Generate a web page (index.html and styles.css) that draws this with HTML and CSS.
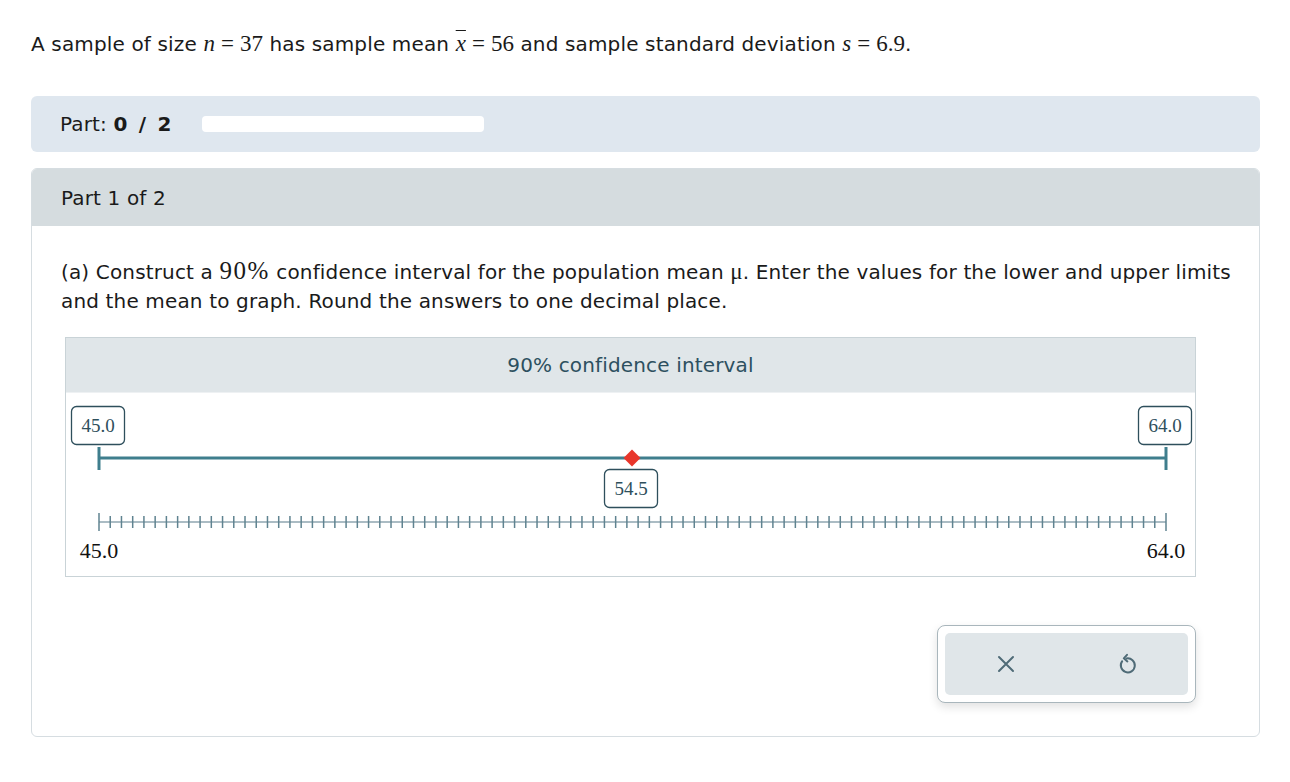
FILE: index.html
```html
<!DOCTYPE html>
<html>
<head>
<meta charset="utf-8">
<link rel="stylesheet" href="styles.css">
</head>
<body>
<div class="page">
  <p class="stem">A sample of size <span class="m"><i>n</i><span class="eq">=</span>37</span> has sample mean <span class="m"><i class="bar">x</i><span class="eq">=</span>56</span> and sample standard deviation <span class="m"><i>s</i><span class="eq">=</span>6.9</span>.</p>

  <div class="partbar">
    <span class="partlabel">Part: <b>0 / 2</b></span>
    <span class="progress"></span>
  </div>

  <div class="card">
    <div class="card-header">Part 1 of 2</div>
    <div class="card-body">
      <p class="question">(a) Construct a <span class="m pct">90%</span> confidence interval for the population mean <span class="mu">μ</span>. Enter the values for the lower and upper limits and the mean to graph. Round the answers to one decimal place.</p>

      <div class="graph">
        <div class="graph-title">90% confidence interval</div>
        <div class="plot">
          <svg width="1129" height="183" viewBox="0 0 1129 183" xmlns="http://www.w3.org/2000/svg">
            <g id="axis"></g>
            <line x1="33" y1="65" x2="1100" y2="65" stroke="#3f7e8d" stroke-width="3"/>
            <line x1="33" y1="54" x2="33" y2="77" stroke="#3f7e8d" stroke-width="3"/>
            <line x1="1100" y1="54" x2="1100" y2="77" stroke="#3f7e8d" stroke-width="3"/>
            <rect x="560" y="59" width="12" height="12" fill="#e8362b" transform="rotate(45 566 65)"/>
            <rect x="5.5" y="13.5" width="53" height="38" rx="5" fill="#fff" stroke="#2e4f5c" stroke-width="1.3"/>
            <text x="32" y="39" class="lbl" text-anchor="middle">45.0</text>
            <rect x="1072.5" y="13.5" width="53" height="38" rx="5" fill="#fff" stroke="#2e4f5c" stroke-width="1.3"/>
            <text x="1099" y="39" class="lbl" text-anchor="middle">64.0</text>
            <rect x="538.5" y="76.5" width="53" height="38" rx="5" fill="#fff" stroke="#2e4f5c" stroke-width="1.3"/>
            <text x="565" y="102" class="lbl" text-anchor="middle">54.5</text>
            <text x="33" y="165" class="ax" text-anchor="middle">45.0</text>
            <text x="1100" y="165" class="ax" text-anchor="middle">64.0</text>
          </svg>
        </div>
      </div>

      <div class="actions">
        <div class="actions-inner">
          <button class="btn" aria-label="Clear">
            <svg width="18" height="18" viewBox="0 0 18 18"><path d="M2 2 L16 16 M16 2 L2 16" stroke="#4f6b77" stroke-width="2" fill="none" stroke-linecap="round"/></svg>
          </button>
          <button class="btn" aria-label="Undo">
            <svg width="20" height="22" viewBox="0 0 20 22"><path d="M5.2 8.2 A7 7 0 1 0 9.5 5.5" stroke="#4f6b77" stroke-width="2" fill="none" stroke-linecap="round"/><path d="M10 1.8 L6.8 5.3 L10.4 8.4" stroke="#4f6b77" stroke-width="2" fill="none" stroke-linecap="round" stroke-linejoin="round"/></svg>
          </button>
        </div>
      </div>
    </div>
  </div>
</div>
<script>
  (function(){
    var g = document.getElementById('axis');
    var x0 = 33, x1 = 1100, n = 95;
    var s = '<line x1="'+x0+'" y1="129" x2="'+x1+'" y2="129" stroke="#8fa6b0" stroke-width="1.5"/>';
    for (var i = 0; i <= n; i++) {
      var x = x0 + (x1 - x0) * i / n;
      var end = (i === 0 || i === n);
      s += '<line x1="'+x+'" y1="'+(end?120:123)+'" x2="'+x+'" y2="'+(end?138:135)+'" stroke="#5f8390" stroke-width="1.5"/>';
    }
    g.innerHTML = s;
  })();
</script>
</body>
</html>
```

FILE: styles.css
```css
* { box-sizing: border-box; }
body {
  margin: 0;
  background: #fff;
  font-family: "DejaVu Sans", Verdana, sans-serif;
  font-size: 20px;
  letter-spacing: 0.15px;
  color: #1a1a1a;
}
.page {
  padding: 30px 30px 0 31px;
}
.stem {
  margin: 0;
  line-height: 29px;
  height: 29px;
}
.m {
  font-family: "Liberation Serif", "Times New Roman", serif;
  font-size: 23px;
  line-height: 1;
  letter-spacing: 0;
}
.m i { font-style: italic; }
.eq { margin: 0 6px; }
.pct {
  font-size: 25px;
  letter-spacing: 1.5px;
}
.bar {
  text-decoration: overline;
  text-decoration-thickness: 1px;
}
.mu {
  font-family: "Liberation Serif", serif;
  font-size: 23px;
  line-height: 1;
}
.partbar {
  margin-top: 37px;
  height: 56px;
  background: #dfe7ef;
  border-radius: 6px;
  display: flex;
  align-items: center;
  padding: 0 29px;
  gap: 29px;
}
.partlabel b {
  font-weight: bold;
  letter-spacing: 1.2px;
  word-spacing: 2px;
}
.progress {
  width: 282px;
  height: 16px;
  background: #fff;
  border-radius: 4px;
}
.card {
  margin-top: 16px;
  height: 569px;
  border: 1px solid #d6dde1;
  border-radius: 6px;
  overflow: hidden;
}
.card-header {
  height: 57px;
  background: #d5dcdf;
  display: flex;
  align-items: center;
  padding-left: 29px;
}
.card-body {
  padding: 32px 12px 0 29px;
}
.question {
  margin: 0;
  line-height: 29px;
}
.graph {
  margin: 21px 0 0 4px;
  width: 1131px;
  border: 1px solid #c9d3d7;
}
.graph-title {
  height: 55px;
  background: #e0e6e9;
  color: #2d5060;
  display: flex;
  align-items: center;
  justify-content: center;
  border-bottom: 1px solid #eef1f3;
}
.plot { height: 183px; }
.plot svg { display: block; }
.lbl {
  font-family: "Liberation Serif", serif;
  font-size: 19px;
  letter-spacing: 0;
  fill: #2e4f5c;
}
.ax {
  font-family: "Liberation Serif", serif;
  font-size: 22px;
  letter-spacing: 0;
  fill: #111;
}
.actions {
  margin: 48px 0 0 876px;
  width: 259px;
  height: 78px;
  border: 1.5px solid #a9b6bc;
  border-radius: 8px;
  padding: 7px;
  background: #fff;
  box-shadow: 0 4px 10px rgba(0,0,0,0.12);
}
.actions-inner {
  height: 100%;
  background: #e0e6e9;
  border-radius: 5px;
  display: flex;
  align-items: center;
  justify-content: space-around;
}
.btn {
  border: 0;
  background: transparent;
  padding: 0;
  width: 60px;
  height: 40px;
  display: flex;
  align-items: center;
  justify-content: center;
}
```
